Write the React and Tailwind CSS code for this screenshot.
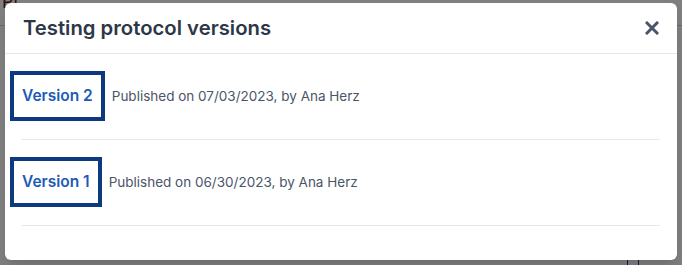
import React from 'react'

const versions = [
  { id: 2, label: 'Version 2', date: '07/03/2023', author: 'Ana Herz' },
  { id: 1, label: 'Version 1', date: '06/30/2023', author: 'Ana Herz' },
]

const CloseIcon = () => (
  <svg width="14" height="14" viewBox="0 0 14 14" fill="none">
    <path d="M2 2L12 12M12 2L2 12" stroke="currentColor" strokeWidth="3" strokeLinecap="square" />
  </svg>
)

export default function App() {
  return (
    <div className="relative w-[682px] h-[265px] overflow-hidden bg-white font-['Inter',sans-serif]">
      {/* page behind the dialog */}
      <div className="absolute inset-0">
        <div className="px-[2px] text-[18px] leading-[20px] text-[#6b1d1d] -mt-[8px]">Pl</div>
        <div className="mt-[13px] border-b border-gray-300" />
        <div className="absolute left-[40px] top-[259px] flex items-baseline gap-3">
          <span className="text-[20px] font-bold text-gray-900">Details</span>
          <span className="text-[14px] font-semibold text-gray-600">2707045</span>
        </div>
        <div className="absolute left-[627px] top-[258px] w-[12px] h-[12px] border border-[#1e3a8a]" />
      </div>
      <div className="absolute inset-0 bg-black/50" />

      {/* dialog */}
      <div className="absolute left-[5px] top-[3px] w-[672px] h-[257px] bg-white rounded-[6px] shadow-lg flex flex-col">
        <header className="flex items-center justify-between h-[51px] pl-[18px] pr-[18px] border-b border-gray-200 shrink-0">
          <h2 className="text-[20.3px] font-semibold text-[#2d3748]">Testing protocol versions</h2>
          <button className="text-[#4a5568]">
            <CloseIcon />
          </button>
        </header>
        <div className="px-[17px] flex flex-col">
          {versions.map(v => (
            <div key={v.id} className="h-[86px] flex items-center gap-[11px] border-b border-gray-200">
              <a
                href="#"
                className="-ml-[8px] -mt-[2px] px-2 py-[9px] text-[15.5px] leading-[24px] font-semibold text-[#1d5bb6] outline-4 outline-[#0b3a7e]"
              >
                {v.label}
              </a>
              <span className="text-[13.5px] text-[#4a5568]">
                Published on {v.date}, by {v.author}
              </span>
            </div>
          ))}
        </div>
      </div>
    </div>
  )
}
